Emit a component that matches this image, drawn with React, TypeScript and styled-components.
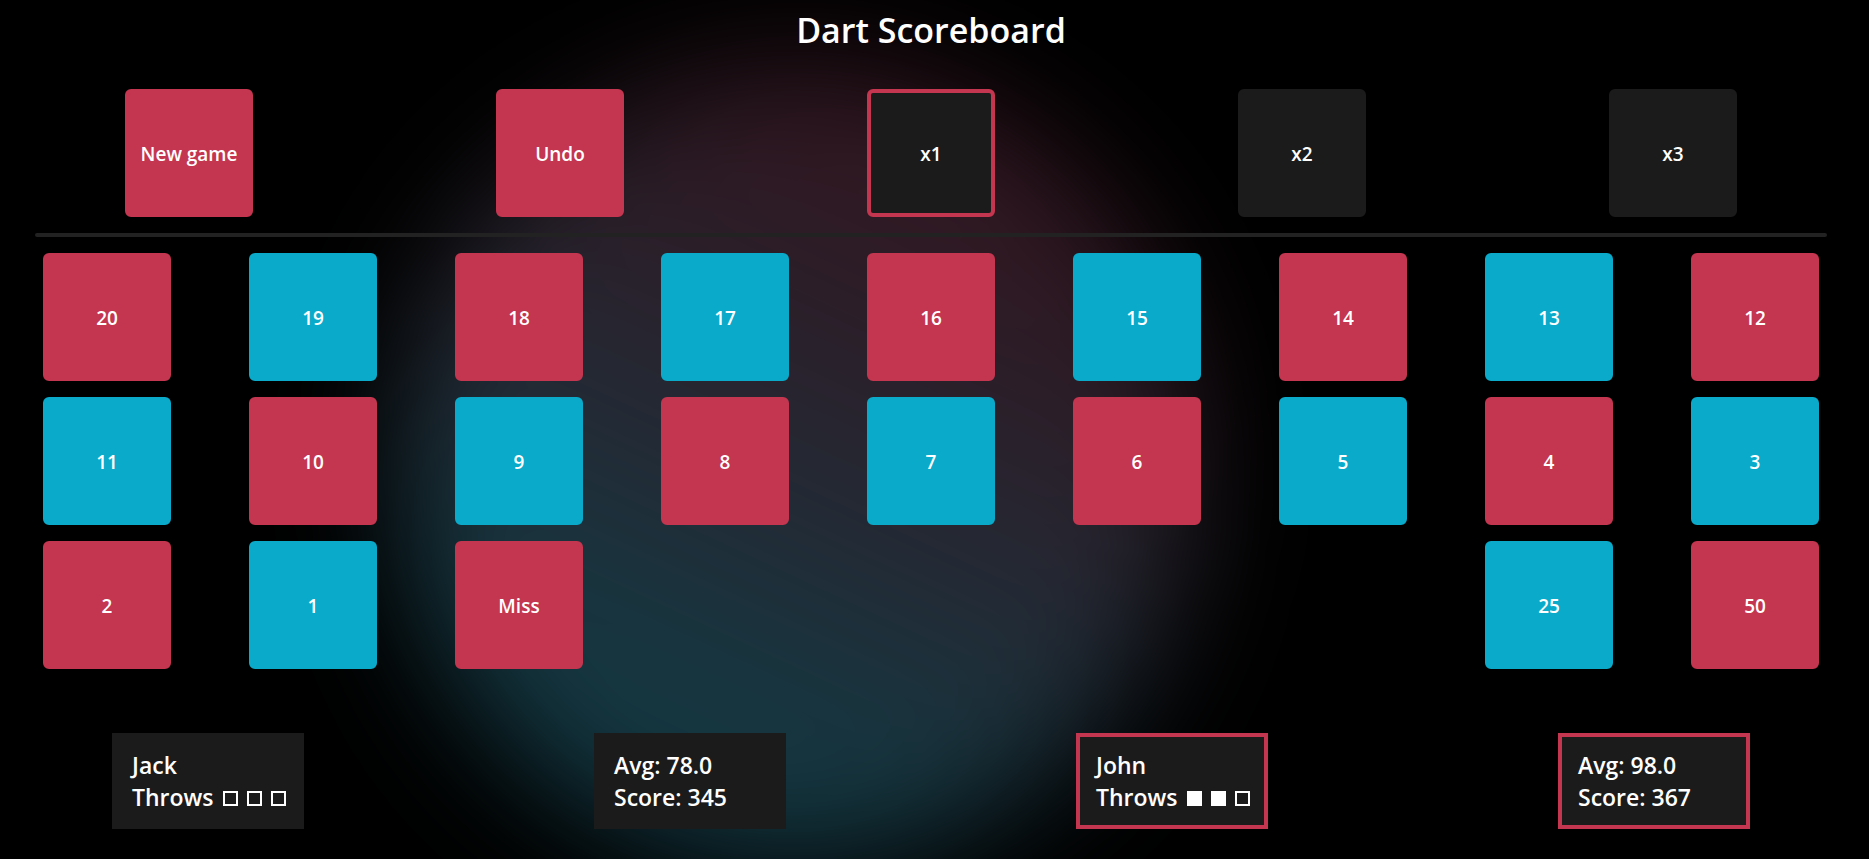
import React from 'react';
import styled, { createGlobalStyle } from 'styled-components';

const GlobalStyle = createGlobalStyle`
  html, body {
    margin: 0;
    padding: 0;
    background: #000;
  }
  body {
    font-family: "Open Sans", "Noto Sans", sans-serif;
    color: #fff;
  }
`;

const RED = '#c4354f';
const CYAN = '#0aaaca';
const DARK = '#1b1b1b';

const Page = styled.div`
  position: relative;
  box-sizing: border-box;
  width: 100%;
  height: 100vh;
  padding: 6px 7px 0 0;
  overflow: hidden;
  background: #000;
`;

const Glow = styled.div`
  position: absolute;
  left: 395px;
  top: 65px;
  width: 800px;
  height: 800px;
  border-radius: 50%;
  background: linear-gradient(205deg, #3e1421 0%, #2d1a24 28%, #252833 50%, #163640 72%, #0f3944 100%);
  filter: blur(60px);
  z-index: 0;
`;

const Content = styled.div`
  position: relative;
  z-index: 1;
  display: flex;
  flex-direction: column;
  align-items: center;
`;

const Title = styled.h1`
  margin: 0;
  font-size: 34px;
  line-height: 48px;
  font-weight: 600;
  color: #fff;
`;

const TopRow = styled.div`
  display: flex;
  justify-content: center;
  gap: 243px;
  margin-top: 35px;
`;

const Tile = styled.button<{ $tone: 'red' | 'cyan' | 'dark'; $active?: boolean; $col?: number }>`
  box-sizing: border-box;
  width: 128px;
  height: 128px;
  border-radius: 6px;
  border: 4px solid
    ${({ $tone, $active }) => ($active ? RED : $tone === 'red' ? RED : $tone === 'cyan' ? CYAN : DARK)};
  background: ${({ $tone }) => ($tone === 'red' ? RED : $tone === 'cyan' ? CYAN : DARK)};
  color: #fff;
  font-family: "Open Sans", "Noto Sans", sans-serif;
  font-size: 19px;
  font-weight: 600;
  padding: 2px 0 0;
  cursor: pointer;
  display: flex;
  align-items: center;
  justify-content: center;
  grid-column: ${({ $col }) => ($col ? $col : 'auto')};
`;

const Divider = styled.div`
  width: 1792px;
  height: 4px;
  border-radius: 2px;
  background: #222;
  margin: 16px 0;
`;

const NumberGrid = styled.div`
  display: grid;
  grid-template-columns: repeat(9, 128px);
  column-gap: 78px;
  row-gap: 16px;
  justify-content: center;
`;

const Players = styled.div`
  display: flex;
  justify-content: center;
  gap: 290px;
  margin-top: 64px;
`;

const Card = styled.div<{ $active?: boolean }>`
  box-sizing: border-box;
  width: 192px;
  height: 96px;
  padding: 12px 16px;
  border: 4px solid ${({ $active }) => ($active ? RED : DARK)};
  background: ${DARK};
  font-size: 23px;
  font-weight: 600;
  line-height: 32px;
  color: #fff;
  white-space: nowrap;
`;

const Box = styled.span<{ $filled?: boolean }>`
  display: inline-block;
  box-sizing: border-box;
  width: 15px;
  height: 15px;
  margin-left: 9px;
  border: 2px solid #fff;
  background: ${({ $filled }) => ($filled ? '#fff' : 'transparent')};
  vertical-align: baseline;
`;

const rows: [string, 'red' | 'cyan', number?][][] = [
  [['20', 'red'], ['19', 'cyan'], ['18', 'red'], ['17', 'cyan'], ['16', 'red'], ['15', 'cyan'], ['14', 'red'], ['13', 'cyan'], ['12', 'red']],
  [['11', 'cyan'], ['10', 'red'], ['9', 'cyan'], ['8', 'red'], ['7', 'cyan'], ['6', 'red'], ['5', 'cyan'], ['4', 'red'], ['3', 'cyan']],
  [['2', 'red'], ['1', 'cyan'], ['Miss', 'red'], ['25', 'cyan', 8], ['50', 'red', 9]],
];

const Throws = ({ used }: { used: number }) => (
  <div>
    Throws
    {[0, 1, 2].map((i) => (
      <Box key={i} $filled={i < used} />
    ))}
  </div>
);

export default function App() {
  return (
    <Page>
      <GlobalStyle />
      <Glow />
      <Content>
        <Title>Dart Scoreboard</Title>
        <TopRow>
          <Tile $tone="red">New game</Tile>
          <Tile $tone="red">Undo</Tile>
          <Tile $tone="dark" $active>x1</Tile>
          <Tile $tone="dark">x2</Tile>
          <Tile $tone="dark">x3</Tile>
        </TopRow>
        <Divider />
        <NumberGrid>
          {rows.flat().map(([label, tone, col]) => (
            <Tile key={label} $tone={tone} $col={col}>
              {label}
            </Tile>
          ))}
        </NumberGrid>
        <Players>
          <Card>
            <div>Jack</div>
            <Throws used={0} />
          </Card>
          <Card>
            <div>Avg: 78.0</div>
            <div>Score: 345</div>
          </Card>
          <Card $active>
            <div>John</div>
            <Throws used={2} />
          </Card>
          <Card $active>
            <div>Avg: 98.0</div>
            <div>Score: 367</div>
          </Card>
        </Players>
      </Content>
    </Page>
  );
}
